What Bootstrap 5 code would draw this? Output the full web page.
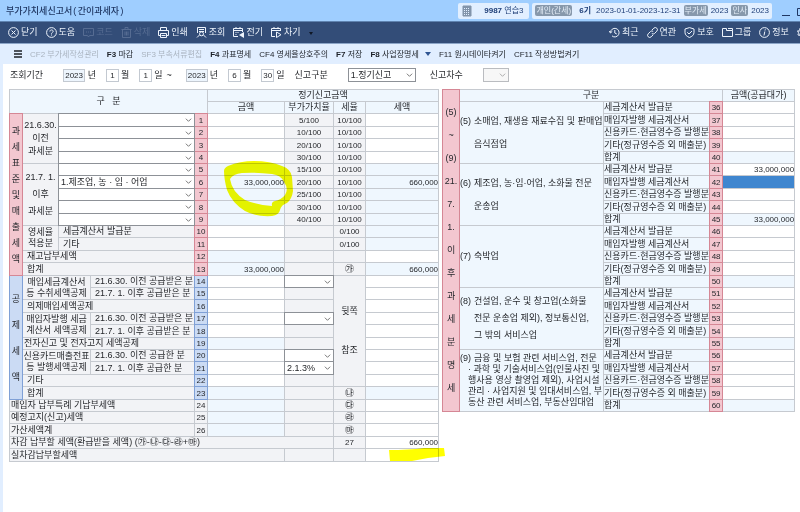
<!DOCTYPE html>
<html lang="ko">
<head>
<meta charset="utf-8">
<meta name="viewport" content="width=device-width, initial-scale=1">
<title>부가가치세신고서(간이과세자)</title>
<link href="https://cdn.jsdelivr.net/npm/bootstrap@5.3.0/dist/css/bootstrap.min.css" rel="stylesheet">
<style>
  body { font: 9px/11px "Liberation Sans", "Noto Sans CJK KR", sans-serif; color: #26282c; background: #fff; overflow-x: hidden; }
  svg { fill: none; stroke: currentColor; flex: none; }
  .titlebar { background: #9fceff; height: 22px; padding-left: 6px; border-bottom: 1px solid #5f83b0; color: #1f3763; overflow: hidden; }
  .titlebar h1 { font: 500 9px/12px "Liberation Mono", "Noto Sans CJK KR", monospace; margin: 0; padding-top: 2px; }
  .pills { gap: 3px; }
  .pill { background: #e2efff; border-radius: 2px; height: 16px; font-size: 8px; padding: 0 3px; gap: 3px; color: #1f3f78; white-space: nowrap; }
  .pill.company { padding: 0 6px 0 4px; gap: 12px; }
  .tagbox { background: #8798ab; color: #e4edf7; border-radius: 2px; padding: 0 1px; }
  .term { padding: 0 2px 0 4px; }
  .winbtns { width: 19px; overflow: hidden; margin-left: 6px; padding-top: 2px; }
  .toolbar { background: #334d78; height: 22px; padding-left: 8px; border-bottom: 1px solid #8ba5c8; color: #eef4fc; overflow: hidden; }
  .tool { display: flex; align-items: center; gap: 2px; background: none; border: 0; padding: 0; color: inherit; white-space: nowrap; }
  .tool:disabled { color: #566c92; }
  .tools-left { gap: 8px; }
  .tools-right { gap: 8px; width: 191px; flex: none; overflow: hidden; }
  .menubar { background: #e1eeff; height: 20px; padding-left: 14px; gap: 8px; font-size: 8px; }
  .menubar button { background: none; border: 0; padding: 0; color: #1c2027; white-space: nowrap; }
  .menubar button:disabled { color: #a9b3bf; }
  .workspace { border-left: 3px solid #e1eeff; padding: 0 7px 0 6px; min-height: calc(100vh - 64px); }
  .filters { height: 25px; padding: 0 0 3px 1px; white-space: nowrap; }
  .filters label { display: flex; align-items: center; gap: 2px; }
  .filters input { width: 13px; height: 13px; border: 1px solid #c3c9d1; padding: 0; text-align: center; font-size: 8px; color: #26282c; }
  .filters input.year { width: 22px; background: #edf5fd; }
  .filters .form-select { height: 14px; border: 1px solid #8d9197; }
  .g10 { margin-left: 10px; }
  .g14 { margin-left: 14px; }
  .g20 { gap: 20px !important; }
  .form-select { --bs-form-select-bg-img: url("data:image/svg+xml,%3csvg xmlns='http://www.w3.org/2000/svg' viewBox='0 0 8 6'%3e%3cpath fill='none' stroke='%23666' d='M1 1.5 4 4.5 7 1.5'/%3e%3c/svg%3e"); font-size: 9px; line-height: 11px; padding: 0 10px 0 2px; background-size: 7px 6px; background-position: right 2px center; border: 0; border-radius: 0; height: 11px; min-height: 0; color: #26282c; }
  .form-select:disabled { background-color: #f3f3f3; opacity: .6; }
  .kind { width: 68px; }
  .order { width: 26px; }
  .sheets { display: grid; grid-template-columns: 429fr 352fr; gap: 3px; align-items: start; }
  .sheet { width: 100%; table-layout: fixed; border-collapse: collapse; white-space: nowrap; }
  .sheet tr { height: 12px; }
  .sheet tr:nth-child(5n+3), .sheet tr:nth-child(5n) { height: 13px; }
  .sheet th, .sheet td { border: 1px solid #c6cad0; padding: 0; font-weight: 400; vertical-align: middle; background: #fff; }
  .sheet .b, .sheet .s { background: #eff7fe; }
  .sheet th { background: #f2f3f6; text-align: left; padding-left: 4px; }
  .sheet .c { text-align: center; padding-left: 0; }
  .sheet .n { text-align: right; font-size: 8px; }
  .sheet .g { background: #f2f3f6; text-align: center; font-size: 8px; }
  .sheet .p, .sheet .q { text-align: center; font-size: 8px; padding: 0; }
  .sheet .p { background: #f3c7d0; border: 1px double #d58795; }
  .sheet .q { background: #cbdbf4; border: 1px double #7fa0d6; }
  .sheet .v { font-size: 9px; }
  .sheet .l0 { padding-left: 1px; }
  .sheet td.s { padding-left: 0; }
  .sheet .w { background: #fff; border: 1px double #8d9197; }
  .sheet .active-cell { background: #3f86cf; }
  .h13 { line-height: 13px; } .h16 { line-height: 16px; } .h17 { line-height: 17px; }
  .h23 { line-height: 23px; } .h26 { line-height: 26px; } .h39 { line-height: 39px; }
  .sheet .hang { padding-left: 14px; }
  .sheet .hang .lead-no { margin-left: -14px; display: inline-block; width: 14px; }
  .sheet .hang.near { padding-left: 8px; }
  .sheet .hang.near .lead-no { margin-left: -8px; }
  .marker { position: absolute; mix-blend-mode: multiply; pointer-events: none; stroke: none; }
  .ring { left: 50%; top: 72px; }
  .stroke2 { right: -7px; bottom: 0; }
</style>
<script src="https://cdn.jsdelivr.net/npm/bootstrap@5.3.0/dist/js/bootstrap.bundle.min.js"></script>
</head>
<body>
<header class="titlebar d-flex align-items-center justify-content-between">
  <h1>부가가치세신고서(간이과세자)</h1>
  <div class="pills d-flex align-items-center">
    <div class="pill company d-flex align-items-center">
      <svg width="10" height="12" viewBox="0 0 10 12" color="#8294aa"><path fill="currentColor" d="M1 1h8v10H1z"/><path stroke="#e2efff" stroke-dasharray="1 1" d="M2 3.5h6M2 5.5h6M2 7.5h6M2 9.5h6"/></svg>
      <span><b>9987</b> 연습3</span>
    </div>
    <div class="pill d-flex align-items-center">
      <span class="tagbox">개인(간세)</span><b class="term">6기</b><span>2023-01-01-2023-12-31</span>
      <span class="tagbox">부가세</span><span>2023</span><span class="tagbox">인사</span><span>2023</span>
    </div>
    <div class="winbtns"><svg width="24" height="10" viewBox="0 0 24 10"><path d="M1 8.5h8M16.5 1.5h7v7h-7z"/></svg></div>
  </div>
</header>

<nav class="toolbar d-flex align-items-center justify-content-between" aria-label="도구">
  <div class="tools-left d-flex align-items-center">
    <button class="tool"><svg width="11" height="11" viewBox="0 0 11 11"><circle cx="5.5" cy="5.5" r="4.9"/><path d="m3.5 3.5 4 4m0-4-4 4"/></svg>닫기</button>
    <button class="tool"><svg width="11" height="11" viewBox="0 0 11 11"><circle cx="5.5" cy="5.5" r="4.9"/><path d="M3.9 4.5c0-2.200 3.300-2 3.300-.1 0 1-1.700 1.100-1.700 2.300M5.500 7.500v1"/></svg>도움</button>
    <button class="tool" disabled><svg width="11" height="11" viewBox="0 0 11 11"><path d="M.5 1.500h10v7h-4l-1 1.500-1-1.500h-4zM3 5h1m1 0h1m1 0h1"/></svg>코드</button>
    <button class="tool" disabled><svg width="11" height="11" viewBox="0 0 11 11"><path d="M.5 2.500h10M4 2.500v-2h3v2M1.500 2.500v8h8v-8M4 4.500v4m1.500-4v4m1.500-4v4"/></svg>삭제</button>
    <button class="tool"><svg width="11" height="11" viewBox="0 0 11 11"><path d="M2.500 3.500v-3h6v3M2.500 8.500h-2v-5h10v5h-2M2.500 6.500h6v4h-6zM3.500 8.500h4"/></svg>인쇄</button>
    <button class="tool"><svg width="11" height="11" viewBox="0 0 11 11"><path d="M1.500 6V.5h8V6M3 2.500h5M3 4.500h5M3.500 8 1 10.500M7.500 8l2.500 2.500"/><circle cx="5.500" cy="6.800" r="2"/></svg>조회</button>
    <button class="tool"><svg width="11" height="11" viewBox="0 0 11 11"><path d="M5 9.500H.5v-8h9V5M.5 3.500h9M3 0v2M7 0v2M2.500 5.500h1m1 0h1M2.500 7.500h1"/><path fill="currentColor" stroke="none" d="M11 5v6L6 8z"/></svg>전기</button>
    <button class="tool"><svg width="11" height="11" viewBox="0 0 11 11"><path d="M4 9.500H.5v-8h9V4M.5 3.500h9M3 0v2M7 0v2"/><path d="M5.500 5v5.500L10 7.700z"/></svg>차기</button>
    <svg width="4" height="4" viewBox="0 0 4 4" color="#0f1725"><path fill="currentColor" stroke="none" d="M0 1h4L2 4z"/></svg>
  </div>
  <div class="tools-right d-flex align-items-center">
    <button class="tool"><svg width="11" height="11" viewBox="0 0 11 11"><path d="M1.500 5.500a4.300 4.300 0 1 1 1.500 3.400M0 4l1.500 2L3.300 4.300M5.800 3v3l2 1"/></svg>최근</button>
    <button class="tool"><svg width="11" height="11" viewBox="0 0 11 11"><path d="m5 3 1.800-1.800a2 2 0 0 1 3 3L7.500 6.500a2 2 0 0 1-2.700 0M6 8 4.200 9.800a2 2 0 0 1-3-3L3.500 4.500a2 2 0 0 1 2.700 0"/></svg>연관</button>
    <button class="tool"><svg width="11" height="11" viewBox="0 0 11 11"><path d="M5.500.6 10 2v3.500c0 2.500-2 4-4.500 5C3 9.500 1 8 1 5.500V2zM3.300 5.300 5 7l3-3"/></svg>보호</button>
    <button class="tool"><svg width="11" height="11" viewBox="0 0 11 11"><path d="M.5 9.500v-8h4v2h6v6zM6 1.500h4.500v2"/></svg>그룹</button>
    <button class="tool"><svg width="11" height="11" viewBox="0 0 11 11"><circle cx="5.500" cy="5.500" r="4.900"/><path d="M6.300 2.300 6 3.500M5.800 4.500l-.8 4"/></svg>정보</button>
    <button class="tool" aria-label="설정"><svg width="11" height="11" viewBox="0 0 11 11"><circle cx="5.500" cy="5.500" r="4"/><circle cx="5.500" cy="5.500" r="1.500"/><circle cx="5.500" cy="5.500" r="4.900" stroke-dasharray="2 1.850"/></svg></button>
  </div>
</nav>

<nav class="menubar d-flex align-items-center" aria-label="메뉴">
  <button aria-label="전체 메뉴"><svg width="8" height="8" viewBox="0 0 8 8"><path stroke-width="1.500" d="M0 1h8M0 4h8M0 7h8"/></svg></button>
  <button disabled>CF2 부가세작성관리</button>
  <button><b>F3</b> 마감</button>
  <button disabled>SF3 부속서류편집</button>
  <button><b>F4</b> 과표명세</button>
  <button>CF4 영세율상호주의</button>
  <button><b>F7</b> 저장</button>
  <button><b>F8</b> 사업장명세 <svg class="ms-1" width="6" height="4" viewBox="0 0 6 4"><path fill="#2f5593" stroke="none" d="M0 0h6L3 4z"/></svg></button>
  <button>F11 원시데이타켜기</button>
  <button>CF11 작성방법켜기</button>
</nav>

<main class="workspace">
  <form class="filters d-flex align-items-center">
    <label class="g20">조회기간<input class="year" id="y0" value="2023"></label>
    <label for="y0">&nbsp;년</label>
    <label class="g10"><input value="1">월</label>
    <label class="g10"><input value="1">일</label><span class="ms-1">~</span>
    <label class="g14"><input class="year" value="2023">년</label>
    <label class="g10"><input value="6">월</label>
    <label class="g10"><input value="30">일</label>
    <label class="g10 g20">신고구분<select class="form-select kind"><option>1.정기신고</option></select></label>
    <label class="g14 g20">신고차수<select class="form-select order" disabled><option></option></select></label>
  </form>

  <div class="sheets">
    <div class="position-relative">
      <table class="sheet">
        <colgroup><col style="width:13px"><col style="width:36px"><col style="width:32px"><col style="width:104px"><col style="width:13px"><col style="width:77px"><col style="width:49px"><col style="width:32px"><col style="width:73px"></colgroup>
        <tbody>
        <tr><th class="c s" colspan="5" rowspan="2">구&nbsp;&nbsp; 분</th><th class="c s" colspan="4">정기신고금액</th></tr>
        <tr><th class="c s">금액</th><th class="c s">부가가치율</th><th class="c s">세율</th><th class="c s">세액</th></tr>
        <tr><th class="p v h16" rowspan="13">과<br>세<br>표<br>준<br>및<br>매<br>출<br>세<br>액</th><th class="c h13" rowspan="4">21.6.30.<br>이전<br>과세분</th><td class="w" colspan="2"><select class="form-select" aria-label="업종 1"><option></option></select></td><td class="p">1</td><td></td><td class="g">5/100</td><td class="g">10/100</td><td></td></tr>
        <tr><td class="w" colspan="2"><select class="form-select" aria-label="업종 2"><option></option></select></td><td class="p">2</td><td></td><td class="g">10/100</td><td class="g">10/100</td><td></td></tr>
        <tr><td class="w" colspan="2"><select class="form-select" aria-label="업종 3"><option></option></select></td><td class="p">3</td><td></td><td class="g">20/100</td><td class="g">10/100</td><td></td></tr>
        <tr><td class="w" colspan="2"><select class="form-select" aria-label="업종 4"><option></option></select></td><td class="p">4</td><td></td><td class="g">30/100</td><td class="g">10/100</td><td></td></tr>
        <tr><th class="c h17" rowspan="5">21.7. 1.<br>이후<br>과세분</th><td class="w" colspan="2"><select class="form-select" aria-label="업종 5"><option></option></select></td><td class="p">5</td><td class="b"></td><td class="g">15/100</td><td class="g">10/100</td><td class="b"></td></tr>
        <tr><td class="w" colspan="2"><select class="form-select" aria-label="업종 6"><option>1.제조업, 농 · 임 · 어업</option></select></td><td class="p">6</td><td class="b n">33,000,000</td><td class="g">20/100</td><td class="g">10/100</td><td class="b n">660,000</td></tr>
        <tr><td class="w" colspan="2"><select class="form-select" aria-label="업종 7"><option></option></select></td><td class="p">7</td><td class="b"></td><td class="g">25/100</td><td class="g">10/100</td><td class="b"></td></tr>
        <tr><td class="w" colspan="2"><select class="form-select" aria-label="업종 8"><option></option></select></td><td class="p">8</td><td class="b"></td><td class="g">30/100</td><td class="g">10/100</td><td class="b"></td></tr>
        <tr><td class="w" colspan="2"><select class="form-select" aria-label="업종 9"><option></option></select></td><td class="p">9</td><td class="b"></td><td class="g">40/100</td><td class="g">10/100</td><td class="b"></td></tr>
        <tr><th class="c" rowspan="2">영세율<br>적용분</th><th colspan="2">세금계산서 발급분</th><td class="p">10</td><td></td><td class="g"></td><td class="g">0/100</td><td class="b"></td></tr>
        <tr><th colspan="2">기타</th><td class="p">11</td><td></td><td class="g"></td><td class="g">0/100</td><td class="b"></td></tr>
        <tr><th colspan="3">재고납부세액</th><td class="p">12</td><td class="b"></td><td class="g"></td><td class="g"></td><td></td></tr>
        <tr><th colspan="3">합계</th><td class="p">13</td><td class="b n">33,000,000</td><td class="g"></td><td class="g v">㉮</td><td class="b n">660,000</td></tr>
        <tr><th class="q v h26" rowspan="10">공<br>제<br>세<br>액</th><th class="c" colspan="2" rowspan="2">매입세금계산서<br>등 수취세액공제</th><th>21.6.30. 이전 공급받은 분</th><td class="q">14</td><td></td><td class="w"><select class="form-select" aria-label="공제율 14"><option></option></select></td><td class="g v h39" rowspan="9">뒷쪽<br>참조</td><td></td></tr>
        <tr><th>21.7. 1. 이후 공급받은 분</th><td class="q">15</td><td></td><td class="g"></td><td></td></tr>
        <tr><th colspan="3">의제매입세액공제</th><td class="q">16</td><td></td><td class="g"></td><td></td></tr>
        <tr><th class="c" colspan="2" rowspan="2">매입자발행 세금<br>계산서 세액공제</th><th>21.6.30. 이전 공급받은 분</th><td class="q">17</td><td></td><td class="w"><select class="form-select" aria-label="공제율 17"><option></option></select></td><td></td></tr>
        <tr><th>21.7. 1. 이후 공급받은 분</th><td class="q">18</td><td></td><td class="g"></td><td></td></tr>
        <tr><th class="l0" colspan="3">전자신고 및 전자고지 세액공제</th><td class="q">19</td><td class="b"></td><td class="g"></td><td></td></tr>
        <tr><th class="c" colspan="2" rowspan="2">신용카드매출전표<br>등 발행세액공제</th><th>21.6.30. 이전 공급한 분</th><td class="q">20</td><td></td><td class="w"><select class="form-select" aria-label="공제율 20"><option></option></select></td><td></td></tr>
        <tr><th>21.7. 1. 이후 공급한 분</th><td class="q">21</td><td></td><td class="w"><select class="form-select" aria-label="공제율 21"><option>2.1.3%</option></select></td><td></td></tr>
        <tr><th colspan="3">기타</th><td class="q">22</td><td></td><td class="g"></td><td></td></tr>
        <tr><th colspan="3">합계</th><td class="q">23</td><td class="b"></td><td class="g"></td><td class="g v">㉯</td><td class="b"></td></tr>
        <tr><th class="l0" colspan="4">매입자 납부특례 기납부세액</th><td class="g">24</td><td class="b"></td><td class="g"></td><td class="g v">㉰</td><td></td></tr>
        <tr><th class="l0" colspan="4">예정고지(신고)세액</th><td class="g">25</td><td class="b"></td><td class="g"></td><td class="g v">㉱</td><td></td></tr>
        <tr><th class="l0" colspan="4">가산세액계</th><td class="g">26</td><td class="b"></td><td class="g"></td><td class="g v">㉲</td><td></td></tr>
        <tr><th class="l0" colspan="7">차감 납부할 세액(환급받을 세액) (㉮-㉯-㉰-㉱+㉲)</th><td class="g">27</td><td class="n">660,000</td></tr>
        <tr><th class="l0" colspan="6">실차감납부할세액</th><td class="g"></td><td class="g"></td><td></td></tr>
        </tbody>
      </table>
      <svg class="marker ring" width="70" height="56" viewBox="0 0 70 56"><path fill="#f4fa00" fill-rule="evenodd" d="M0 10Q0 7 4 5 16 0 30 0 46 0 58 5 67 8 68 16L69 30Q68 38 63 42 57 44 56 49 55 54 48 55 32 56 21 50 8 42 3 29 0 18 0 10ZM6 18Q9 13 18 12 32 11 48 13 57 14 60 21 65 28 61 34 57 39 51 40 47 41 48 45 33 44 21 39 8 31 6 18Z"/></svg>
      <svg class="marker stroke2" width="58" height="15" viewBox="0 0 58 15"><path fill="#ff0" d="M1 3 Q20 3 36 1L56 1 57 9 40 11 24 14 2 14Z"/></svg>
    </div>

    <table class="sheet">
      <colgroup><col style="width:17px"><col style="width:144px"><col style="width:106px"><col style="width:13px"><col style="width:72px"></colgroup>
      <tbody>
      <tr><th class="p v h23" rowspan="26">(5)<br>~<br>(9)<br>21.<br>7.<br>1.<br>이<br>후<br>과<br>세<br>분<br>명<br>세</th><th class="c s" colspan="3">구분</th><th class="c s">금액(공급대가)</th></tr>
      <tr><th class="s hang h23" rowspan="5"><span class="lead-no">(5)</span>소매업, 재생용 재료수집 및 판매업<br>음식점업</th><td class="s">세금계산서 발급분</td><td class="p">36</td><td></td></tr>
      <tr><td class="s">매입자발행 세금계산서</td><td class="p">37</td><td></td></tr>
      <tr><td class="s">신용카드·현금영수증 발행분</td><td class="p">38</td><td></td></tr>
      <tr><td class="s">기타(정규영수증 외 매출분)</td><td class="p">39</td><td></td></tr>
      <tr><td class="s">합계</td><td class="p">40</td><td class="b"></td></tr>
      <tr><th class="s hang h23" rowspan="5"><span class="lead-no">(6)</span>제조업, 농·임·어업, 소화물 전문<br>운송업</th><td class="s">세금계산서 발급분</td><td class="p">41</td><td class="n">33,000,000</td></tr>
      <tr><td class="s">매입자발행 세금계산서</td><td class="p">42</td><td class="active-cell"></td></tr>
      <tr><td class="s">신용카드·현금영수증 발행분</td><td class="p">43</td><td></td></tr>
      <tr><td class="s">기타(정규영수증 외 매출분)</td><td class="p">44</td><td></td></tr>
      <tr><td class="s">합계</td><td class="p">45</td><td class="b n">33,000,000</td></tr>
      <tr><th class="s hang" rowspan="5"><span class="lead-no">(7)</span>숙박업</th><td class="s">세금계산서 발급분</td><td class="p">46</td><td></td></tr>
      <tr><td class="s">매입자발행 세금계산서</td><td class="p">47</td><td></td></tr>
      <tr><td class="s">신용카드·현금영수증 발행분</td><td class="p">48</td><td></td></tr>
      <tr><td class="s">기타(정규영수증 외 매출분)</td><td class="p">49</td><td></td></tr>
      <tr><td class="s">합계</td><td class="p">50</td><td class="b"></td></tr>
      <tr><th class="s hang h17" rowspan="5"><span class="lead-no">(8)</span>건설업, 운수 및 창고업(소화물<br>전문 운송업 제외), 정보통신업,<br>그 밖의 서비스업</th><td class="s">세금계산서 발급분</td><td class="p">51</td><td></td></tr>
      <tr><td class="s">매입자발행 세금계산서</td><td class="p">52</td><td></td></tr>
      <tr><td class="s">신용카드·현금영수증 발행분</td><td class="p">53</td><td></td></tr>
      <tr><td class="s">기타(정규영수증 외 매출분)</td><td class="p">54</td><td></td></tr>
      <tr><td class="s">합계</td><td class="p">55</td><td class="b"></td></tr>
      <tr><th class="s hang near" rowspan="5"><span class="lead-no">(9)</span>금융 및 보험 관련 서비스업, 전문<br>· 과학 및 기술서비스업(인물사진 및<br>행사용 영상 촬영업 제외), 사업시설<br>관리 · 사업지원 및 임대서비스업, 부<br>동산 관련 서비스업, 부동산임대업</th><td class="s">세금계산서 발급분</td><td class="p">56</td><td></td></tr>
      <tr><td class="s">매입자발행 세금계산서</td><td class="p">57</td><td></td></tr>
      <tr><td class="s">신용카드·현금영수증 발행분</td><td class="p">58</td><td></td></tr>
      <tr><td class="s">기타(정규영수증 외 매출분)</td><td class="p">59</td><td></td></tr>
      <tr><td class="s">합계</td><td class="p">60</td><td class="b"></td></tr>
      </tbody>
    </table>
  </div>
</main>
</body>
</html>
